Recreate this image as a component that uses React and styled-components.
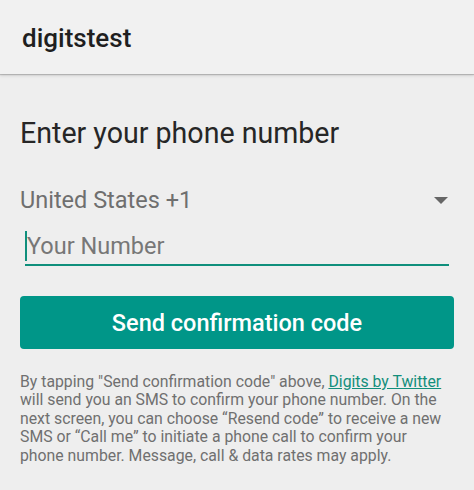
import React from 'react';
import styled, { createGlobalStyle } from 'styled-components';

const GlobalStyle = createGlobalStyle`
  html, body {
    margin: 0;
    padding: 0;
    background: #eeeeee;
  }
  body {
    font-family: Roboto, "Noto Sans", "Liberation Sans", sans-serif;
  }
`;

const Screen = styled.div`
  width: 474px;
  height: 490px;
  background: #eeeeee;
  overflow: hidden;
  display: flex;
  flex-direction: column;
`;

const AppBar = styled.header`
  height: 74px;
  flex-shrink: 0;
  background: #f1f1f1;
  display: flex;
  align-items: center;
  padding: 2px 22px 0;
  box-sizing: border-box;
  box-shadow: 0 1px 1px rgba(0, 0, 0, 0.18), 0 2px 3px rgba(0, 0, 0, 0.1);
  position: relative;
  z-index: 1;
`;

const AppTitle = styled.h1`
  margin: 0;
  font-size: 26px;
  font-weight: 500;
  color: #1f1f1f;
`;

const Content = styled.main`
  padding: 42px 20px 0;
  display: flex;
  flex-direction: column;
`;

const Heading = styled.h2`
  margin: 0;
  font-size: 28.6px;
  font-weight: 400;
  color: #262626;
  line-height: 34px;
`;

const CountryRow = styled.div`
  margin-top: 35px;
  display: flex;
  align-items: center;
  justify-content: space-between;
  padding-right: 6px;
  height: 30px;
`;

const CountryLabel = styled.span`
  font-size: 23.5px;
  color: #6f6f6f;
`;

/* dropdown arrow of the country picker */
const Caret = styled.span`
  width: 0;
  height: 0;
  border-left: 7px solid transparent;
  border-right: 7px solid transparent;
  border-top: 7px solid #666666;
`;

const NumberField = styled.div`
  margin: 13px 5px 0 5px;
  height: 36px;
  display: flex;
  align-items: center;
  border-bottom: 2px solid #0f8f7c;
`;

const Cursor = styled.span`
  width: 2px;
  height: 30px;
  background: #0f8f7c;
`;

const Placeholder = styled.span`
  font-size: 23.5px;
  color: #777777;
`;

const SendButton = styled.button`
  margin-top: 30px;
  height: 53px;
  border: none;
  border-radius: 4px;
  background: #009688;
  color: #ffffff;
  font-family: inherit;
  font-size: 23.5px;
  font-weight: 500;
  cursor: pointer;
`;

const Disclaimer = styled.p`
  margin: 24px 0 0;
  font-size: 15.8px;
  line-height: 18.4px;
  color: #707070;
`;

const Link = styled.a`
  color: #138f7c;
  text-decoration: underline;
`;

export default function App() {
  return (
    <>
      <GlobalStyle />
      <Screen>
        <AppBar>
          <AppTitle>digitstest</AppTitle>
        </AppBar>
        <Content>
          <Heading>Enter your phone number</Heading>
          <CountryRow>
            <CountryLabel>United States +1</CountryLabel>
            <Caret />
          </CountryRow>
          <NumberField>
            <Cursor />
            <Placeholder>Your Number</Placeholder>
          </NumberField>
          <SendButton>Send confirmation code</SendButton>
          <Disclaimer>
            By tapping "Send confirmation code" above, <Link href="#">Digits by Twitter</Link> will
            send you an SMS to confirm your phone number. On the next screen, you can choose
            “Resend code” to receive a new SMS or “Call me” to initiate a phone call to confirm
            your phone number. Message, call &amp; data rates may apply.
          </Disclaimer>
        </Content>
      </Screen>
    </>
  );
}
